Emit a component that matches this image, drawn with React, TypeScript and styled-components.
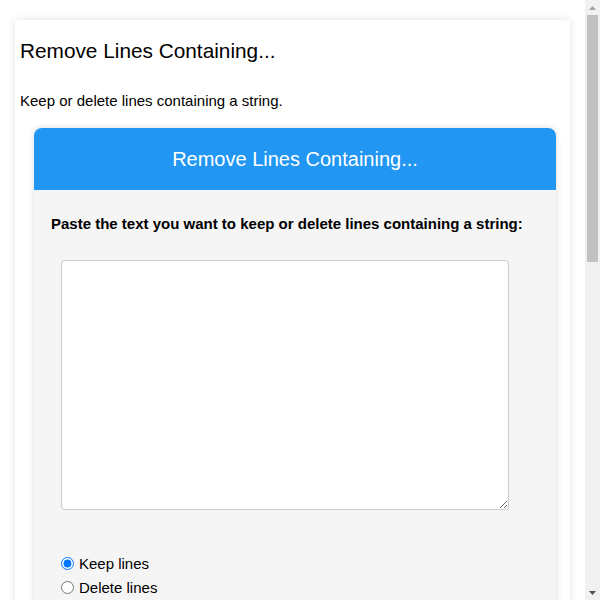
import React, { useState } from "react";
import styled, { createGlobalStyle } from "styled-components";

const Global = createGlobalStyle`
  html, body { margin: 0; padding: 0; background: #ffffff; }
  body { font-family: "Liberation Sans", Arial, sans-serif; color: #000; }
  * { box-sizing: border-box; }
`;

const Page = styled.div`
  padding: 20px 30px 40px 15px;
`;

const OuterCard = styled.div`
  background: #fff;
  box-shadow: 0 0 8px rgba(0, 0, 0, 0.12);
  padding: 5px 5px 30px 5px;
  display: flex;
  flex-direction: column;
`;

const Title = styled.h1`
  font-size: 20.8px;
  font-weight: normal;
  line-height: 24px;
  margin: 14px 0 0 0;
`;

const Intro = styled.p`
  font-size: 15px;
  line-height: 17px;
  margin: 29px 0 0 0;
`;

const ToolCard = styled.div`
  margin: 19px 9px 0 14px;
  border-radius: 8px;
  overflow: hidden;
  background: #f5f5f5;
  box-shadow: 0 0 6px rgba(0, 0, 0, 0.15);
`;

const ToolHeader = styled.div`
  background: #2196f3;
  color: #fff;
  text-align: center;
  font-size: 20px;
  line-height: 22px;
  padding: 20px 0;
`;

const ToolBody = styled.div`
  padding: 25px 17px 40px 17px;
  display: flex;
  flex-direction: column;
`;

const Label = styled.label`
  font-size: 15px;
  font-weight: bold;
  line-height: 17px;
`;

const Area = styled.textarea<{ $h: number }>`
  width: 448px;
  height: ${(p) => p.$h}px;
  margin: 28px 0 0 10px;
  border: 1px solid #ccc;
  border-radius: 4px;
  background: #fff;
  font-family: "Liberation Sans", Arial, sans-serif;
  font-size: 14px;
  display: block;
`;

const RadioGroup = styled.div`
  margin: 41px 0 0 10px;
  display: flex;
  flex-direction: column;
`;

const RadioRow = styled.label`
  display: flex;
  align-items: center;
  font-size: 15px;
  line-height: 17px;
  height: 24px;
  gap: 5px;
`;

const Radio = styled.input`
  width: 13px;
  height: 13px;
  margin: 0;
`;

const Input = styled.input`
  width: 448px;
  height: 34px;
  margin: 10px 0 0 10px;
  border: 1px solid #ccc;
  border-radius: 4px;
  padding: 6px 8px;
  font-size: 15px;
`;

const Button = styled.button`
  margin: 24px 0 0 10px;
  align-self: flex-start;
  background: #2196f3;
  color: #fff;
  border: none;
  border-radius: 4px;
  padding: 10px 20px;
  font-size: 15px;
  font-family: "Liberation Sans", Arial, sans-serif;
`;

const SubLabel = styled(Label)`
  margin-top: 30px;
`;

/* Browser-style scrollbar overlay (drawn, since the window hides its own) */
const ScrollTrack = styled.div`
  position: fixed;
  top: 0;
  right: 0;
  width: 15px;
  height: 100vh;
  background: #f1f1f1;
  display: flex;
  flex-direction: column;
  align-items: center;
`;

const ScrollArrow = styled.div<{ $down?: boolean }>`
  height: 15px;
  width: 15px;
  display: flex;
  align-items: center;
  justify-content: center;
  ${(p) => (p.$down ? "margin-top: auto;" : "")}
`;

const ScrollThumb = styled.div`
  width: 11px;
  height: 247px;
  background: #c1c1c1;
`;

function Arrow({ down }: { down?: boolean }) {
  return (
    <ScrollArrow $down={down}>
      <svg width="7" height="4" viewBox="0 0 7 4">
        {down ? (
          <polygon points="0,0 7,0 3.5,4" fill="#505050" />
        ) : (
          <polygon points="0,4 7,4 3.5,0" fill="#a3a3a3" />
        )}
      </svg>
    </ScrollArrow>
  );
}

export default function App() {
  const [mode, setMode] = useState("keep");
  return (
    <>
      <Global />
      <Page>
        <OuterCard>
          <Title>Remove Lines Containing...</Title>
          <Intro>Keep or delete lines containing a string.</Intro>
          <ToolCard>
            <ToolHeader>Remove Lines Containing...</ToolHeader>
            <ToolBody>
              <Label>Paste the text you want to keep or delete lines containing a string:</Label>
              <Area $h={250} />
              <RadioGroup>
                <RadioRow>
                  <Radio type="radio" name="mode" checked={mode === "keep"} onChange={() => setMode("keep")} />
                  Keep lines
                </RadioRow>
                <RadioRow>
                  <Radio type="radio" name="mode" checked={mode === "delete"} onChange={() => setMode("delete")} />
                  Delete lines
                </RadioRow>
              </RadioGroup>
              <SubLabel>Containing the string:</SubLabel>
              <Input type="text" />
              <Button>Process</Button>
              <SubLabel>Result:</SubLabel>
              <Area $h={250} />
            </ToolBody>
          </ToolCard>
        </OuterCard>
      </Page>
      <ScrollTrack aria-hidden="true">
        <Arrow />
        <ScrollThumb />
        <Arrow down />
      </ScrollTrack>
    </>
  );
}
